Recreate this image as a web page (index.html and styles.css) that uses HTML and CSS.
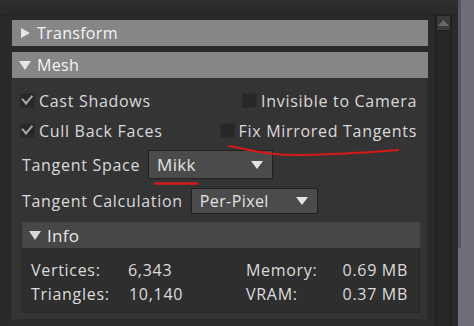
FILE: index.html
```html
<!DOCTYPE html>
<html lang="en">
<head>
	<meta charset="UTF-8">
	<title>Mesh Inspector</title>
	<link rel="stylesheet" href="styles.css">
</head>
<body>
	<div class="window">
		<div class="inspector">
			<div class="topbar"></div>
			<div class="frame">
				<div class="content">
					<div class="section-header">
						<svg class="arrow" width="12" height="12" viewBox="0 0 12 12"><path d="M2 1 L11 6 L2 11 Z" fill="#e6e6e6"/></svg>
						<span>Transform</span>
					</div>
					<div class="section-header open">
						<svg class="arrow" width="12" height="12" viewBox="0 0 12 12"><path d="M0 2 L12 2 L6 11 Z" fill="#e6e6e6"/></svg>
						<span>Mesh</span>
					</div>
					<div class="section-body">
						<div class="check-row">
							<label class="check"><span class="box checked"></span>Cast Shadows</label>
							<label class="check"><span class="box"></span>Invisible to Camera</label>
						</div>
						<div class="check-row">
							<label class="check"><span class="box checked"></span>Cull Back Faces</label>
							<label class="check"><span class="box"></span>Fix Mirrored Tangents</label>
						</div>
						<div class="field-row space">
							<span class="field-label">Tangent Space</span>
							<div class="select select-mikk"><span>Mikk</span><span class="caret"></span></div>
						</div>
						<div class="field-row calc">
							<span class="field-label">Tangent Calculation</span>
							<div class="select select-pixel"><span>Per-Pixel</span><span class="caret"></span></div>
						</div>
						<div class="info">
							<div class="info-header">
								<svg class="arrow" width="12" height="12" viewBox="0 0 12 12"><path d="M0 2 L12 2 L6 11 Z" fill="#d8d8d8"/></svg>
								<span>Info</span>
							</div>
							<div class="info-body">
								<span>Vertices:</span><span>6,343</span><span>Memory:</span><span class="num">0.69 MB</span>
								<span>Triangles:</span><span class="tri">10,140</span><span>VRAM:</span><span class="num">0.37 MB</span>
							</div>
						</div>
					</div>
				</div>
				<div class="scrollbar">
					<div class="scroll-btn"><svg width="11" height="6" viewBox="0 0 11 6"><path d="M0 6 L5.5 0 L11 6 Z" fill="#6a6a6a"/></svg></div>
				</div>
			</div>
		</div>
		<div class="side"><div class="side-stripe"></div></div>
	</div>
	<!-- red pen marks drawn over the screenshot -->
	<svg class="marks" width="474" height="326" viewBox="0 0 474 326">
		<path d="M229 146 C 255 151, 275 156, 305 155 S 375 152, 398 150" stroke="#d61a1a" stroke-width="2" fill="none" stroke-linecap="round"/>
		<path d="M155 183.5 L197 183.5" stroke="#d61a1a" stroke-width="2.5" fill="none" stroke-linecap="round"/>
	</svg>
</body>
</html>
```

FILE: styles.css
```css
* {
    box-sizing: border-box;
}
body {
    margin: 0;
    width: 474px;
    height: 326px;
    overflow: hidden;
    background: #2a2a2a;
    font-family: "Open Sans", "Noto Sans", sans-serif;
    font-size: 16px;
    letter-spacing: 0.7px;
    color: #dadada;
    position: relative;
}
.window {
    display: flex;
    height: 326px;
}
.inspector {
    flex: 1;
    display: flex;
    flex-direction: column;
}
.topbar {
    height: 15px;
    border-top: 5px solid #303030;
    border-bottom: 1px solid #232323;
    background: #2b2b2b;
}
.frame {
    flex: 1;
    display: flex;
    padding: 0 6px 0 12px;
    border-left: 7px solid #282828;
}
.content {
    width: 416px;
    padding-top: 5px;
    margin-left: -7px;
}
.section-header {
    height: 26px;
    background: #868686;
    color: #f4f4f4;
    font-size: 16px;
    letter-spacing: 0.3px;
    display: flex;
    align-items: center;
    padding-left: 7px;
    gap: 6px;
    margin-bottom: 6px;
}
.section-header.open {
    margin-bottom: 0;
}
.section-header .arrow {
    margin-top: -1px;
}
.section-body {
    background: #343434;
    border-left: 1px solid #3c3c3c;
    border-right: 1px solid #2c2c2c;
    border-bottom: 1px solid #2c2c2c;
    height: 242px;
    padding: 15px 10px 0 7px;
}
.check-row {
    display: flex;
    justify-content: space-between;
    height: 30px;
}
.check {
    display: flex;
    align-items: flex-start;
    gap: 4px;
    line-height: 16px;
}
.box {
    width: 15px;
    height: 15px;
    background: #272727;
    border: 1px solid #2d2d2d;
    position: relative;
}
.box.checked::after {
    content: "";
    position: absolute;
    left: 2px;
    top: 2px;
    width: 9px;
    height: 5px;
    border-left: 2px solid #a8a8a8;
    border-bottom: 2px solid #a8a8a8;
    transform: rotate(-50deg) skewX(-10deg);
    transform-origin: 30% 60%;
}
.field-row {
    display: flex;
    align-items: center;
    padding-left: 2px;
}
.field-row.space {
    height: 29px;
    margin-top: -3px;
}
.field-row.calc {
    height: 26px;
    margin-top: 9px;
}
.field-label {
    margin-right: 8px;
}
.select {
    height: 100%;
    background: #4b4b4b;
    border: 1px solid #202020;
    display: flex;
    align-items: center;
    justify-content: space-between;
    padding: 0 9px 0 8px;
    color: #e2e2e2;
}
.select-mikk {
    width: 125px;
    font-size: 17px;
    letter-spacing: 0.3px;
}
.select-pixel {
    width: 127px;
    letter-spacing: 0.4px;
}
.caret {
    width: 0;
    height: 0;
    border-left: 6px solid transparent;
    border-right: 6px solid transparent;
    border-top: 8px solid #e4e4e4;
}
.info {
    margin-top: 8px;
    width: 398px;
    margin-left: 2px;
}
.info-header {
    height: 26px;
    background: #474747;
    display: flex;
    align-items: center;
    gap: 6px;
    padding-left: 7px;
    font-size: 17px;
    letter-spacing: 0.3px;
    color: #e6e6e6;
}
.info-body {
    height: 65px;
    background: #2e2e2e;
    border: 1px solid #282828;
    border-top: none;
    display: grid;
    grid-template-columns: 97px 118px 1fr auto;
    grid-auto-rows: 24px;
    align-items: center;
    padding: 10px 11px 0 8px;
    color: #dcdcdc;
}
.info-body .tri {
    padding-left: 1px;
}
.scrollbar {
    width: 17px;
    margin-left: 7px;
    background: #262626;
    border-left: 1px solid #1e1e1e;
    border-right: 1px solid #1e1e1e;
}
.scroll-btn {
    height: 16px;
    background: #3a3a3a;
    border: 1px solid #222;
    display: flex;
    align-items: center;
    justify-content: center;
}
.side {
    width: 16px;
    background: #6f6f79;
    display: flex;
}
.side-stripe {
    width: 3px;
    height: 248px;
    background: #55555a;
}
.marks {
    position: absolute;
    left: 0;
    top: 0;
    pointer-events: none;
}
```
